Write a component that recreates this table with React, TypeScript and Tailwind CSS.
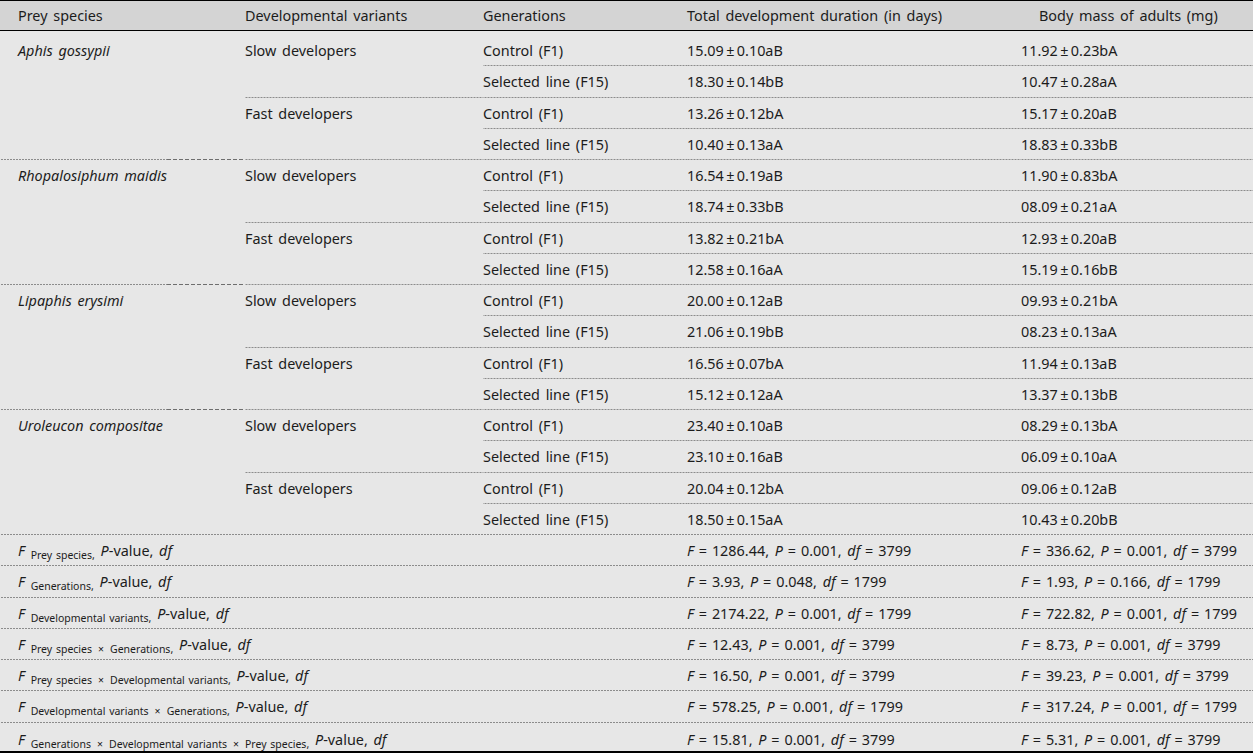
import React from "react";

const LINE =
  "bg-[linear-gradient(to_right,#8c8c8c_60%,transparent_60%)] bg-[length:3px_1px] bg-repeat-x bg-top";
const BOLD =
  "bg-[linear-gradient(to_right,#6e6e6e_75%,transparent_75%)] bg-[length:6px_1px] bg-repeat-x bg-top";

type Row = [string, string, string, string, string];
type Variant = { name: string; rows: Row[] };
type Species = { name: string; variants: Variant[] };

const data: Species[] = [
  {
    name: "Aphis gossypii",
    variants: [
      {
        name: "Slow developers",
        rows: [
          ["Control (F1)", "15.09", "0.10aB", "11.92", "0.23bA"],
          ["Selected line (F15)", "18.30", "0.14bB", "10.47", "0.28aA"],
        ],
      },
      {
        name: "Fast developers",
        rows: [
          ["Control (F1)", "13.26", "0.12bA", "15.17", "0.20aB"],
          ["Selected line (F15)", "10.40", "0.13aA", "18.83", "0.33bB"],
        ],
      },
    ],
  },
  {
    name: "Rhopalosiphum maidis",
    variants: [
      {
        name: "Slow developers",
        rows: [
          ["Control (F1)", "16.54", "0.19aB", "11.90", "0.83bA"],
          ["Selected line (F15)", "18.74", "0.33bB", "08.09", "0.21aA"],
        ],
      },
      {
        name: "Fast developers",
        rows: [
          ["Control (F1)", "13.82", "0.21bA", "12.93", "0.20aB"],
          ["Selected line (F15)", "12.58", "0.16aA", "15.19", "0.16bB"],
        ],
      },
    ],
  },
  {
    name: "Lipaphis erysimi",
    variants: [
      {
        name: "Slow developers",
        rows: [
          ["Control (F1)", "20.00", "0.12aB", "09.93", "0.21bA"],
          ["Selected line (F15)", "21.06", "0.19bB", "08.23", "0.13aA"],
        ],
      },
      {
        name: "Fast developers",
        rows: [
          ["Control (F1)", "16.56", "0.07bA", "11.94", "0.13aB"],
          ["Selected line (F15)", "15.12", "0.12aA", "13.37", "0.13bB"],
        ],
      },
    ],
  },
  {
    name: "Uroleucon compositae",
    variants: [
      {
        name: "Slow developers",
        rows: [
          ["Control (F1)", "23.40", "0.10aB", "08.29", "0.13bA"],
          ["Selected line (F15)", "23.10", "0.16aB", "06.09", "0.10aA"],
        ],
      },
      {
        name: "Fast developers",
        rows: [
          ["Control (F1)", "20.04", "0.12bA", "09.06", "0.12aB"],
          ["Selected line (F15)", "18.50", "0.15aA", "10.43", "0.20bB"],
        ],
      },
    ],
  },
];

type Stat = { sub: string[]; a: [string, string, string]; b: [string, string, string] };
const stats: Stat[] = [
  { sub: ["Prey species"], a: ["1286.44", "0.001", "3799"], b: ["336.62", "0.001", "3799"] },
  { sub: ["Generations"], a: ["3.93", "0.048", "1799"], b: ["1.93", "0.166", "1799"] },
  { sub: ["Developmental variants"], a: ["2174.22", "0.001", "1799"], b: ["722.82", "0.001", "1799"] },
  { sub: ["Prey species", "Generations"], a: ["12.43", "0.001", "3799"], b: ["8.73", "0.001", "3799"] },
  {
    sub: ["Prey species", "Developmental variants"],
    a: ["16.50", "0.001", "3799"],
    b: ["39.23", "0.001", "3799"],
  },
  {
    sub: ["Developmental variants", "Generations"],
    a: ["578.25", "0.001", "1799"],
    b: ["317.24", "0.001", "1799"],
  },
  {
    sub: ["Generations", "Developmental variants", "Prey species"],
    a: ["15.81", "0.001", "3799"],
    b: ["5.31", "0.001", "3799"],
  },
];

const T = "pt-[8px] leading-[17px]";

function Val({ m, s }: { m: string; s: string }) {
  return (
    <span>
      {m}
      {"\u2009\u00b1\u2009"}
      {s}
    </span>
  );
}

function Eq() {
  return <span className="inline-block w-[18px] text-center">=</span>;
}

function FVals({ v }: { v: [string, string, string] }) {
  return (
    <span>
      <i>F</i>
      <Eq />
      {v[0]}, <i>P</i>
      <Eq />
      {v[1]}, <i>df</i>
      <Eq />
      {v[2]}
    </span>
  );
}

function SpeciesBlock({ s, first }: { s: Species; first: boolean }) {
  const cells: React.ReactNode[] = [];
  cells.push(
    <div key="sp" className="row-span-4 flex flex-col">
      {first ? (
        <div className="h-px" />
      ) : (
        <div className="flex h-px">
          <div className={`w-[167px] h-px ${LINE}`} />
          <div className={`flex-1 h-px ${BOLD}`} />
        </div>
      )}
      <div className={`pl-[18px] italic ${T} -mt-px`}>{s.name}</div>
    </div>
  );
  s.variants.forEach((v, vi) => {
    const topLine = !(first && vi === 0);
    cells.push(
      <div key={`v${vi}`} className={`row-span-2 ${topLine ? LINE : ""}`}>
        <div className={T}>{v.name}</div>
      </div>
    );
    v.rows.forEach((r, ri) => {
      const line = !(first && vi === 0 && ri === 0);
      const cls = line ? LINE : "";
      cells.push(
        <div key={`g${vi}${ri}`} className={`${cls} ${T}`}>
          {r[0]}
        </div>,
        <div key={`d${vi}${ri}`} className={`${cls} ${T}`}>
          <Val m={r[1]} s={r[2]} />
        </div>,
        <div key={`b${vi}${ri}`} className={`${cls} ${T}`}>
          <Val m={r[3]} s={r[4]} />
        </div>
      );
    });
  });
  return (
    <div className="grid grid-cols-[245px_238px_204px_334px_1fr] auto-rows-[31.25px]">{cells}</div>
  );
}

export default function App() {
  return (
    <div className="w-[1253px] h-[755px] bg-white font-['Noto_Sans','Liberation_Sans',sans-serif] text-[14.4px] [word-spacing:2px] text-[#1c1c1c]">
      <div className="border-t border-black">
        <div className="flex h-[30px] items-center bg-[#d4d4d4] border-b border-black">
          <div className="w-[245px] pl-[18px]">Prey species</div>
          <div className="w-[238px]">Developmental variants</div>
          <div className="w-[204px]">Generations</div>
          <div className="w-[334px]">Total development duration (in days)</div>
          <div className="flex-1 pl-[18px]">Body mass of adults (mg)</div>
        </div>
        <div className="bg-[#e7e7e7] pt-[3px] border-b-2 border-black">
          {data.map((s, i) => (
            <SpeciesBlock key={s.name} s={s} first={i === 0} />
          ))}
          {stats.map((st, si) => {
            const last = si === stats.length - 1;
            const t = last ? "pt-[9px] leading-[17px]" : T;
            return (
              <div key={si} className={`flex ${last ? "h-[29px]" : "h-[31.25px]"} ${LINE}`}>
                <div className={`w-[687px] pl-[18px] ${t}`}>
                  <i>F</i>{" "}
                  <span className="text-[10.5px] align-[-3px] [word-spacing:1px]">
                    {st.sub.map((p, pi) => (
                      <React.Fragment key={pi}>
                        {pi > 0 && <span className="mx-[6px]">{"\u00d7"}</span>}
                        {p}
                      </React.Fragment>
                    ))}
                    ,
                  </span>{" "}
                  <i>P</i>-value, <i>df</i>
                </div>
                <div className={`w-[334px] ${t}`}>
                  <FVals v={st.a} />
                </div>
                <div className={`flex-1 ${t}`}>
                  <FVals v={st.b} />
                </div>
              </div>
            );
          })}
        </div>
      </div>
    </div>
  );
}
